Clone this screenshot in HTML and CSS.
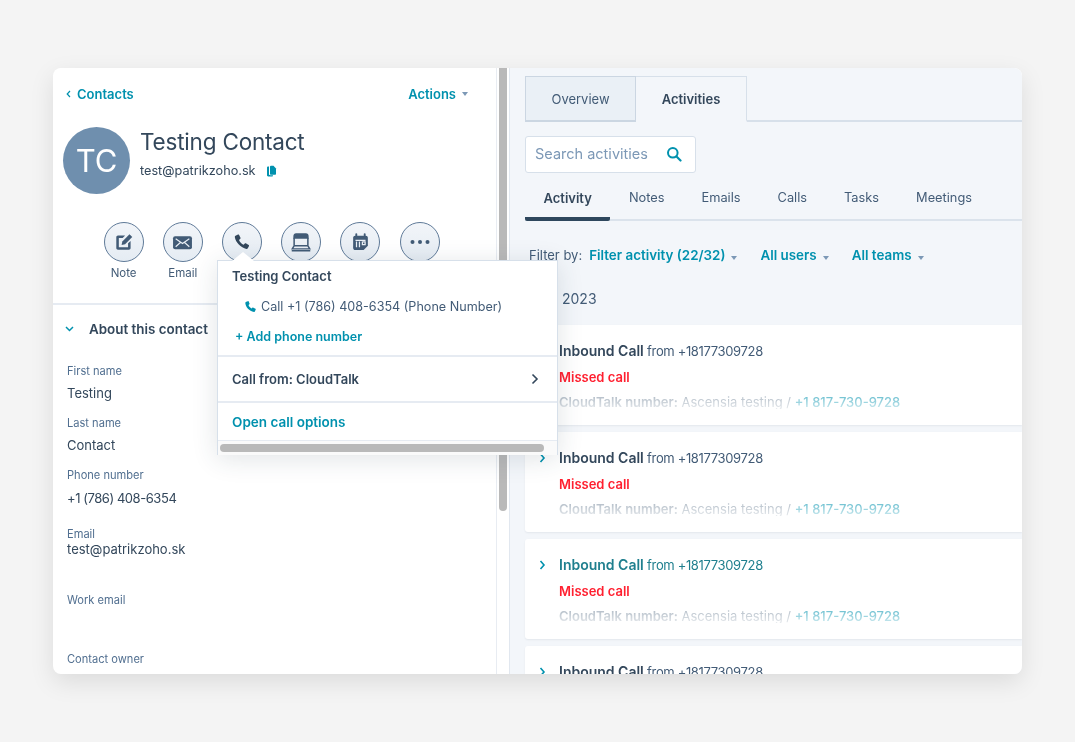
FILE: index.html
```html
<!DOCTYPE html>
<html lang="en">
<head>
    <meta charset="UTF-8">
    <meta name="viewport" content="width=device-width, initial-scale=1.0">
    <title>Testing Contact</title>
    <link rel="stylesheet" href="styles.css">
</head>
<body>
<div class="sheet">
    <div class="contact">
        <div class="topline">
            <a class="back"><svg width="5" height="8" viewBox="0 0 5 8"><path d="M4 1 1.2 4 4 7" fill="none" stroke="#0091ae" stroke-width="1.2"/></svg><span>Contacts</span></a>
            <a class="actions">Actions<i class="caret"></i></a>
        </div>
        <div class="person">
            <div class="avatar">TC</div>
            <div>
                <h1>Testing Contact</h1>
                <p class="person_mail">test@patrikzoho.sk
                    <svg width="11" height="13" viewBox="0 0 11 12"><path d="M1 2.2C1 1.5 1.5 1 2.2 1H3v7.5c0 .8.5 1.2 1.2 1.2H7v.3c0 .6-.5 1-1.100 1H2.200C1.500 11 1 10.500 1 9.800z" fill="#0091ae"/><path d="M4 1.200C4 .6 4.400.3 5 .3h2.500L10 3v5.300c0 .6-.4 1-1 1H5c-.6 0-1-.4-1-1z" fill="#0091ae"/></svg>
                </p>
            </div>
        </div>
        <div class="quick">
            <div class="quick_item">
                <div class="circle"><svg width="22" height="22" viewBox="0 0 20 20"><path d="M3 5.500C3 4.700 3.700 4 4.500 4H11L8.800 6.300H5.300V14.700H13.700V11.200L16 9V15.500C16 16.300 15.300 17 14.500 17H4.500C3.700 17 3 16.300 3 15.500z" fill="#425b76"/><path d="M8.500 9.500 15 3l2.500 2.500L11 12l-3.200.7z" fill="#425b76"/></svg></div>
                <span>Note</span>
            </div>
            <div class="quick_item">
                <div class="circle"><svg width="21" height="21" viewBox="0 0 20 20"><rect x="1" y="4" width="18" height="12.500" rx="2" fill="#425b76"/><path d="M3.500 6.500 10 11l6.500-4.500M3.500 14l4.500-4M16.500 14 12 10" fill="none" stroke="#eaf0f6" stroke-width="1.100"/></svg></div>
                <span>Email</span>
            </div>
            <div class="quick_item">
                <div class="circle"><svg width="20" height="20" viewBox="0 0 20 20"><path d="M3.500 3.800 6 2.500c.4-.2.800 0 1 .3l1.500 3c.2.400.1.800-.2 1L7 8c.8 2 2.500 3.800 4.600 4.800l1.200-1.300c.3-.3.700-.4 1-.2l2.900 1.600c.4.200.5.600.3 1l-1.200 2.400c-.3.500-.8.800-1.400.7C9 15.500 3.500 10.300 2.800 5c-.1-.5.200-1 .7-1.200z" fill="#33475b"/></svg></div>
            </div>
            <div class="quick_item">
                <div class="circle"><svg width="24" height="22" viewBox="0 0 22 20"><path d="M4 4.500C4 3.100 5 2 6.500 2h9C17 2 18 3.100 18 4.500V7H4z" fill="#425b76"/><path d="M4.700 6v7M17.300 6v7" stroke="#425b76" stroke-width="1.400"/><path d="M4.700 13.500h12.600L19 16.300H3z" fill="none" stroke="#425b76" stroke-width="1.300"/><path d="M2.500 18h17" stroke="#425b76" stroke-width="1.300"/></svg></div>
            </div>
            <div class="quick_item">
                <div class="circle"><svg width="21" height="21" viewBox="0 0 20 20"><path d="M3 5.500C3 4.400 3.800 3.500 5 3.500h10c1.200 0 2 .9 2 2V13l-4 4.200H5c-1.200 0-2-.9-2-2z" fill="#425b76"/><path d="M6 2v3M14 2v3" stroke="#425b76" stroke-width="1.800" stroke-linecap="round"/><path d="M5.200 8h9.600M6.200 9v5.500M9 9v5.500M11.800 9v3.500M11.800 9.500h2.600v2.600h-2.600" fill="none" stroke="#eaf0f6" stroke-width="1.200"/></svg></div>
            </div>
            <div class="quick_item">
                <div class="circle"><svg width="24" height="6" viewBox="0 0 22 6"><circle cx="3.500" cy="3" r="2" fill="#425b76"/><circle cx="11" cy="3" r="2" fill="#425b76"/><circle cx="18.500" cy="3" r="2" fill="#425b76"/></svg></div>
            </div>
        </div>
        <div class="about">
            <div class="about_head"><svg width="9" height="6" viewBox="0 0 9 6"><path d="M1 1 4.500 4.500 8 1" fill="none" stroke="#0091ae" stroke-width="1.500"/></svg><h2>About this contact</h2></div>
            <div class="field f_first"><label>First name</label><p>Testing</p></div>
            <div class="field f_last"><label>Last name</label><p>Contact</p></div>
            <div class="field f_phone"><label>Phone number</label><p>+1 (786) 408-6354</p></div>
            <div class="field f_email"><label>Email</label><p>test@patrikzoho.sk</p></div>
            <div class="field f_work"><label>Work email</label></div>
            <div class="field"><label>Contact owner</label></div>
        </div>
    </div>

    <div class="track"><div class="thumb"></div></div>

    <div class="timeline">
        <div class="tabs">
            <div class="tab">Overview</div>
            <div class="tab tab_on">Activities</div>
        </div>
        <div class="search">
            <span>Search activities</span>
            <svg width="16" height="16" viewBox="0 0 16 16"><circle cx="6.800" cy="6.800" r="4.800" fill="none" stroke="#0091ae" stroke-width="2"/><path d="M10.500 10.500 14.500 14.500" stroke="#0091ae" stroke-width="2.200" stroke-linecap="round"/></svg>
        </div>
        <div class="subtabs">
            <a class="subtab subtab_on">Activity</a>
            <a class="subtab">Notes</a>
            <a class="subtab">Emails</a>
            <a class="subtab">Calls</a>
            <a class="subtab">Tasks</a>
            <a class="subtab">Meetings</a>
        </div>
        <div class="filters">
            <span class="filter_label">Filter by:</span>
            <a>Filter activity (22/32)<i class="caret gray"></i></a>
            <a>All users<i class="caret gray"></i></a>
            <a>All teams<i class="caret gray"></i></a>
        </div>
        <div class="year">2023</div>

        <div class="call">
            <svg width="7" height="10" viewBox="0 0 7 10"><path d="M1.500 1 5 5 1.500 9" fill="none" stroke="#0091ae" stroke-width="1.600"/></svg>
            <div class="call_body">
                <p class="call_title"><b>Inbound Call</b> from +18177309728</p>
                <p class="missed">Missed call</p>
                <p class="call_info"><b>CloudTalk number:</b> Ascensia testing / <em>+1 817-730-9728</em></p>
            </div>
        </div>
        <div class="call">
            <svg width="7" height="10" viewBox="0 0 7 10"><path d="M1.500 1 5 5 1.500 9" fill="none" stroke="#0091ae" stroke-width="1.600"/></svg>
            <div class="call_body">
                <p class="call_title"><b>Inbound Call</b> from +18177309728</p>
                <p class="missed">Missed call</p>
                <p class="call_info"><b>CloudTalk number:</b> Ascensia testing / <em>+1 817-730-9728</em></p>
            </div>
        </div>
        <div class="call call_hover">
            <svg width="7" height="10" viewBox="0 0 7 10"><path d="M1.500 1 5 5 1.500 9" fill="none" stroke="#0091ae" stroke-width="1.600"/></svg>
            <div class="call_body">
                <p class="call_title"><b>Inbound Call</b> from +18177309728</p>
                <p class="missed">Missed call</p>
                <p class="call_info"><b>CloudTalk number:</b> Ascensia testing / <em>+1 817-730-9728</em></p>
            </div>
        </div>
        <div class="call">
            <svg width="7" height="10" viewBox="0 0 7 10"><path d="M1.500 1 5 5 1.500 9" fill="none" stroke="#0091ae" stroke-width="1.600"/></svg>
            <div class="call_body">
                <p class="call_title"><b>Inbound Call</b> from +18177309728</p>
            </div>
        </div>
    </div>

    <div class="popover">
        <i class="popover_tip"></i>
        <div class="pop_top">
            <h3>Testing Contact</h3>
            <p class="pop_call"><svg width="13" height="14" viewBox="0 0 20 20"><path d="M3.500 2 6 1c.4-.2.800 0 1 .3l1.500 3.500c.2.400.1.800-.2 1L7 7c.8 2.500 2.500 4.300 4.600 5.300l1.200-1.300c.3-.3.700-.4 1-.2l3.900 1.900c.4.200.5.600.3 1l-1.200 3.200c-.3.500-.8.800-1.400.7C8 16.500 2.500 10.300 2 4c-.1-.9.800-1.700 1.500-2z" fill="#0091ae"/></svg>Call +1 (786) 408-6354 (Phone Number)</p>
            <a class="pop_add">+ Add phone number</a>
        </div>
        <div class="pop_row">
            <b>Call from: CloudTalk</b>
            <svg width="8" height="12" viewBox="0 0 8 12"><path d="M1.500 1.500 6 6 1.500 10.500" fill="none" stroke="#33475b" stroke-width="1.600"/></svg>
        </div>
        <div class="pop_row pop_open"><a>Open call options</a></div>
        <div class="pop_scroll"><div></div></div>
    </div>
</div>
</body>
</html>
```

FILE: styles.css
```css
*{margin:0;padding:0;box-sizing:border-box;}
body{background:#f4f4f4;height:742px;padding:68px 53px 0;font-family:"Inter","Noto Sans",sans-serif;color:#33475b;overflow:hidden;}
a{color:#0091ae;font-weight:600;}

.sheet{position:relative;display:flex;width:969px;height:606px;background:#fff;border-radius:8px;overflow:hidden;box-shadow:0 8px 24px rgba(0,0,0,.1);filter:blur(.3px);}

/* left column */
.contact{width:443px;flex:none;height:606px;overflow:hidden;}
.topline{display:flex;justify-content:space-between;align-items:center;padding:18px 28px 0 13px;height:34px;font-size:13px;}
.back{display:flex;align-items:center;gap:6px;}
.actions{display:flex;align-items:center;}
.caret{display:inline-block;width:0;height:0;margin-left:6px;border:3.500px solid transparent;border-top:4px solid #7c98b6;border-bottom:0;}
.caret.gray{border-top-color:#7c98b6;}
.person{display:flex;gap:10px;padding:25px 0 0 10px;}
.avatar{width:67px;height:67px;border-radius:50%;background:#6f8fae;color:#fff;font-size:31px;display:flex;align-items:center;justify-content:center;}
h1{font-size:22.500px;font-weight:400;line-height:30px;letter-spacing:-.2px;}
.person_mail{display:flex;align-items:center;gap:10px;font-size:12.700px;margin-top:4px;line-height:20px;}
.quick{display:flex;height:56px;margin-top:28px;padding-left:41px;}
.quick_item{width:59.200px;flex:none;display:flex;flex-direction:column;align-items:center;gap:4px;font-size:11.500px;color:#425b76;}
.quick_item span{line-height:14px;}
.circle{width:40px;height:40px;flex:none;border-radius:50%;border:1.500px solid #5f7a98;background:linear-gradient(#f2f5f9,#e5ecf3);display:flex;align-items:center;justify-content:center;}
.about{margin-top:25px;border-top:2px solid #e6ebf2;padding:0 14px;}
.about_head{display:flex;align-items:center;gap:15px;height:47px;margin-left:-2px;}
h2{font-size:13.400px;font-weight:600;}
.field label{display:block;font-size:11.100px;line-height:16px;color:#516f90;}
.field p{font-size:13px;line-height:20px;}
.f_first{margin-top:11px;}
.f_first p,.f_last p{margin-top:4px;}
.f_first,.f_last{height:52px;}
.f_phone{height:59px;}
.f_phone p{margin-top:5px;letter-spacing:-.45px;}
.f_email{height:66px;}
.f_email p{margin-top:-3px;}
.f_work{height:59px;}

/* scrollbar between the columns */
.track{width:14px;flex:none;height:606px;background:#fff;border-left:1px solid #e8ecf2;border-right:1px solid #e1e7ef;padding:0 2px;}
.thumb{height:443px;background:#b9b9b9;border-radius:0 0 4px 4px;}

/* right column */
.timeline{flex:1;background:#f3f6fa;padding:8px 0 0 15px;overflow:hidden;}
.tabs{display:flex;height:46px;border-bottom:2px solid #d7e0ea;}
.tab{width:111px;height:46px;display:flex;align-items:center;justify-content:center;font-size:13px;color:#425b76;background:#eaf0f6;border:1px solid #cbd6e2;border-bottom:2px solid #cbd6e2;}
.tab_on{width:111px;background:#f3f6fa;font-weight:600;color:#33475b;border-color:#d7e0ea;border-bottom:2px solid #f3f6fa;border-left:0;}
.search{display:flex;align-items:center;justify-content:space-between;width:171px;height:37px;margin-top:14px;padding:0 13px 2px 9px;background:#fff;border:1px solid #d7e0ea;border-radius:3px;font-size:14.500px;color:#7c98b6;}
.subtabs{display:flex;height:41px;margin-top:7px;border-bottom:2px solid #dbe3ec;}
.subtab{height:41px;padding:0 18.500px;line-height:36px;font-size:12.800px;font-weight:400;color:#425b76;}
.subtab_on{font-size:13px;font-weight:600;color:#33475b;border-bottom:4px solid #2e475d;border-radius:2px;}
.filters{display:flex;align-items:center;padding:25px 0 0 4px;font-size:13.400px;line-height:18px;}
.filter_label{font-size:13px;color:#425b76;margin-right:7px;}
.filters a{margin-right:23px;}
.year{padding:25px 0 0 37px;font-size:14px;line-height:20px;height:61px;color:#425b76;}
.call{display:flex;gap:13px;height:100px;margin-bottom:7px;padding:16px 0 0 14px;background:#fff;border-radius:3px 0 0 3px;box-shadow:0 1px 2px rgba(45,62,80,.08);}
.call>svg{margin-top:5px;flex:none;}
.call p{font-size:13px;line-height:20px;white-space:nowrap;}
.call .call_title{color:#425b76;letter-spacing:-.35px;}
.call_title b{font-size:14px;letter-spacing:0;color:#33475b;font-weight:600;}
.call_hover .call_title,.call_hover .call_title b{color:#1f7f8e;}
.missed{color:#ff2030;font-weight:600;margin-top:6px;}
.call .call_info{margin-top:8px;height:14px;line-height:14px;overflow:hidden;color:#7c8ea0;-webkit-mask-image:linear-gradient(rgba(0,0,0,.6),rgba(0,0,0,.2));mask-image:linear-gradient(rgba(0,0,0,.6),rgba(0,0,0,.2));}
.call_info b{font-weight:600;}
.call_info em{font-style:normal;color:#0091ae;font-weight:500;}

/* call menu */
.popover{position:absolute;left:164px;top:192px;width:341px;height:195px;background:#fff;border:1px solid #d7e0ea;box-shadow:0 4px 24px rgba(45,62,80,.14);}
.popover_tip{position:absolute;left:14px;top:-9px;width:0;height:0;border:11px solid transparent;border-top:0;border-bottom:9px solid #fff;}
.pop_top{height:96px;padding:6px 14px 0;border-bottom:2px solid #e6ebf2;}
h3{font-size:13px;font-weight:600;line-height:18px;}
.pop_call{display:flex;align-items:center;gap:4px;font-size:12.600px;line-height:20px;margin:12px 0 0 12px;color:#425b76;}
.pop_add{display:block;font-size:12.500px;line-height:18px;margin:11px 0 0 3px;}
.pop_row{display:flex;align-items:center;justify-content:space-between;height:46px;padding:0 18px 0 14px;font-size:13px;border-bottom:2px solid #e6ebf2;}
.pop_row b{font-weight:600;}
.pop_open{height:38px;font-size:13.500px;border-bottom:1px solid #e6ebf2;}
.pop_scroll{height:14px;background:#fafafa;padding:3px 13px 3px 2px;}
.pop_scroll div{height:8px;background:#b9b9b9;border-radius:4px;}
```
